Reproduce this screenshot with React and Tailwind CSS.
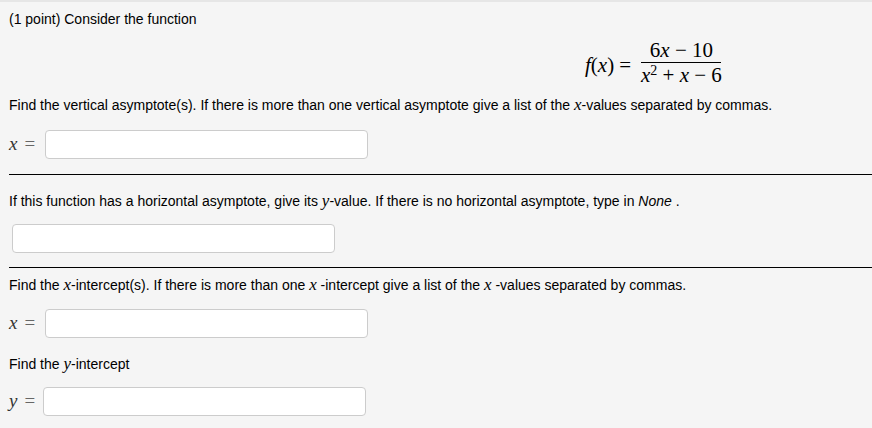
const mathFont = { fontFamily: '"Liberation Serif", "DejaVu Serif", serif' };

const M = ({ children }) => (
  <span className="italic text-[17px]" style={mathFont}>
    {children}
  </span>
);

const AnswerBox = ({ className = "" }) => (
  <input
    type="text"
    className={`h-[29px] w-[323px] rounded-[4px] border border-[#cccccc] bg-white outline-none ${className}`}
  />
);

const LabeledAnswer = ({ v }) => (
  <div className="flex items-center">
    <span className="flex items-center w-[36px] text-[#333] text-[19px]" style={mathFont}>
      <span className="italic">{v}</span>
      <span className="ml-[7px] text-[#666]">=</span>
    </span>
    <AnswerBox />
  </div>
);

export default function App() {
  return (
    <div
      className="min-h-screen bg-[#f5f5f5] border-t-2 border-[#e6e6e6] pl-[9px] pt-[7px] text-[14px] text-black"
      style={{ fontFamily: '"Liberation Sans", Arial, sans-serif' }}
    >
      <p className="leading-[20px]">(1 point) Consider the function</p>

      {/* formula */}
      <div className="mt-[9px] pl-[576px] flex items-center h-[50px]" style={mathFont}>
        <span className="text-[21px] pt-[6px] w-[56px]">
          <span className="italic">f</span>(<span className="italic">x</span>)
          <span className="ml-[5px]">=</span>
        </span>
        <span className="inline-flex flex-col items-center text-[21px]">
          <span className="leading-[23px]">
            6<span className="italic">x</span> − 10
          </span>
          <span className="h-[1px] w-[80px] bg-black" />
          <span className="leading-[24px]">
            <span className="italic">x</span>
            <sup className="text-[14px]">2</sup> + <span className="italic">x</span> − 6
          </span>
        </span>
      </div>

      <p className="mt-[7px] leading-[20px]">
        Find the vertical asymptote(s). If there is more than one vertical asymptote give a list of
        the <M>x</M>-values separated by commas.
      </p>

      <div className="mt-[15px]">
        <LabeledAnswer v="x" />
      </div>

      <hr className="mt-[15px] border-0 h-[1px] bg-black" />

      <p className="mt-[16px] leading-[20px]">
        If this function has a horizontal asymptote, give its <M>y</M>-value. If there is no
        horizontal asymptote, type in <span className="italic">None</span> .
      </p>

      <div className="mt-[13px] pl-[3px]">
        <AnswerBox />
      </div>

      <hr className="mt-[14px] border-0 h-[1px] bg-black" />

      <p className="mt-[7px] leading-[20px]">
        Find the <M>x</M>-intercept(s). If there is more than one <M>x</M> -intercept give a list of
        the <M>x</M> -values separated by commas.
      </p>

      <div className="mt-[14px]">
        <LabeledAnswer v="x" />
      </div>

      <p className="mt-[16px] leading-[20px]">
        Find the <M>y</M>-intercept
      </p>

      <div className="mt-[13px] pl-0">
        <div className="flex items-center">
          <span className="flex items-center w-[34px] text-[#333] text-[19px]" style={mathFont}>
            <span className="italic">y</span>
            <span className="ml-[7px] text-[#666]">=</span>
          </span>
          <AnswerBox />
        </div>
      </div>
    </div>
  );
}
